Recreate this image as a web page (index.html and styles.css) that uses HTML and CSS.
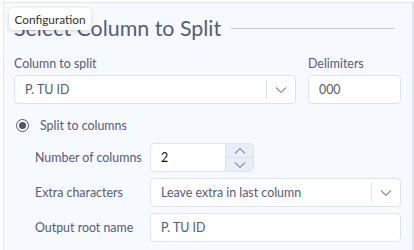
FILE: index.html
```html
<!DOCTYPE html>
<html>
<head>
<meta charset="utf-8">
<link rel="stylesheet" href="styles.css">
</head>
<body>
<div class="panel">
  <div class="title-row">
    <h1 class="title">Select Column to Split</h1>
    <div class="rule"></div>
  </div>
  <div class="top-fields">
    <div class="field field-col">
      <div class="label">Column to split</div>
      <div class="box select">
        <span class="val">P. TU ID</span>
        <span class="sep"></span>
        <span class="chev"><svg width="12" height="8" viewBox="0 0 12 8"><path d="M1 1.5 L6 6.5 L11 1.5" fill="none" stroke="#8a93ad" stroke-width="1.2"/></svg></span>
      </div>
    </div>
    <div class="field field-del">
      <div class="label">Delimiters</div>
      <div class="box"><span class="val">000</span></div>
    </div>
  </div>
  <div class="radio-row">
    <span class="radio"><span class="dot"></span></span>
    <span class="radio-label">Split to columns</span>
  </div>
  <div class="rows">
    <div class="row">
      <div class="row-label">Number of columns</div>
      <div class="box num">
        <span class="val dark">2</span>
        <span class="spin">
          <span class="spin-btn"><svg width="12" height="8" viewBox="0 0 12 8"><path d="M1 6.5 L6 1.5 L11 6.5" fill="none" stroke="#8a93ad" stroke-width="1.2"/></svg></span>
          <span class="spin-btn"><svg width="12" height="8" viewBox="0 0 12 8"><path d="M1 1.5 L6 6.5 L11 1.5" fill="none" stroke="#8a93ad" stroke-width="1.2"/></svg></span>
        </span>
      </div>
    </div>
    <div class="row">
      <div class="row-label">Extra characters</div>
      <div class="box select wide">
        <span class="val">Leave extra in last column</span>
        <span class="sep"></span>
        <span class="chev"><svg width="12" height="8" viewBox="0 0 12 8"><path d="M1 1.5 L6 6.5 L11 1.5" fill="none" stroke="#8a93ad" stroke-width="1.2"/></svg></span>
      </div>
    </div>
    <div class="row">
      <div class="row-label">Output root name</div>
      <div class="box wide"><span class="val">P. TU ID</span></div>
    </div>
  </div>
  <div class="tooltip">Configuration</div>
</div>
</body>
</html>
```

FILE: styles.css
```css
html, body {
  margin: 0;
  padding: 0;
  background: #ffffff;
  width: 414px;
  height: 250px;
  overflow: hidden;
  font-family: "Lato", "Liberation Sans", sans-serif;
}
.panel {
  position: relative;
  margin: 2px 0 0 3px;
  height: 248px;
  box-sizing: border-box;
  background: #f6f9fe;
  border-left: 1px solid #e1e6ef;
  border-top: 1px solid #e1e6ef;
  border-right: 2px solid #dfe3eb;
  padding: 0 10px 0 10px;
}
.title-row {
  display: flex;
  align-items: center;
  height: 46px;
  padding-top: 4px;
  box-sizing: border-box;
}
.title {
  margin: 0;
  font-size: 21.4px;
  font-weight: 400;
  color: #555c7a;
  line-height: 24px;
  white-space: nowrap;
}
.rule {
  flex: 1;
  height: 1px;
  background: #c6cad2;
  margin-left: 10px;
  margin-right: 7px;
  margin-top: 0;
}
.top-fields {
  display: flex;
  gap: 12px;
  margin-top: 7px;
}
.field-col { width: 282px; }
.field-del { width: 93px; }
.label {
  font-size: 12.4px;
  color: #555b78;
  line-height: 16px;
  height: 16px;
  margin-bottom: 3px;
}
.box {
  height: 29px;
  box-sizing: border-box;
  background: #ffffff;
  border: 1px solid #dde3ee;
  border-radius: 4px;
  display: flex;
  align-items: center;
  overflow: hidden;
}
.val {
  flex: 1;
  padding-left: 10px;
  font-size: 12.4px;
  color: #555a78;
  white-space: nowrap;
}
.val.dark { color: #111; }
.sep {
  width: 1px;
  height: 19px;
  background: #dde3ee;
}
.chev {
  width: 28px;
  display: flex;
  justify-content: center;
  align-items: center;
}
.radio-row {
  display: flex;
  align-items: center;
  margin-top: 13px;
  height: 16px;
  padding-left: 2px;
}
.radio {
  width: 13px;
  height: 13px;
  box-sizing: border-box;
  border: 1.3px solid #4d5473;
  border-radius: 50%;
  display: flex;
  align-items: center;
  justify-content: center;
  background: #fff;
}
.dot {
  width: 7px;
  height: 7px;
  border-radius: 50%;
  background: #4d5473;
}
.radio-label {
  margin-left: 11px;
  font-size: 12.4px;
  color: #555b78;
}
.rows {
  display: flex;
  flex-direction: column;
  gap: 6px;
  margin-top: 10px;
  padding-left: 21px;
}
.row {
  display: flex;
  align-items: center;
}
.row-label {
  width: 115px;
  font-size: 12.4px;
  color: #555b78;
  white-space: nowrap;
}
.num {
  width: 104px;
  align-items: stretch;
}
.num .val {
  display: flex;
  align-items: center;
}
.spin {
  width: 27px;
  display: flex;
  flex-direction: column;
  background: #e9edf8;
  border-left: 1px solid #dde3ee;
}
.spin-btn {
  flex: 1;
  display: flex;
  align-items: center;
  justify-content: center;
}
.spin-btn + .spin-btn {
  border-top: 1px solid #dde3ee;
}
.wide { width: 251px; }
.tooltip {
  position: absolute;
  left: 5px;
  top: 5px;
  width: 82px;
  height: 22px;
  box-sizing: border-box;
  background: #ffffff;
  border-radius: 4px;
  box-shadow: 0 1px 4px rgba(0,0,0,0.15);
  font-size: 11.8px;
  color: #333;
  display: flex;
  align-items: center;
  justify-content: center;
}
```
